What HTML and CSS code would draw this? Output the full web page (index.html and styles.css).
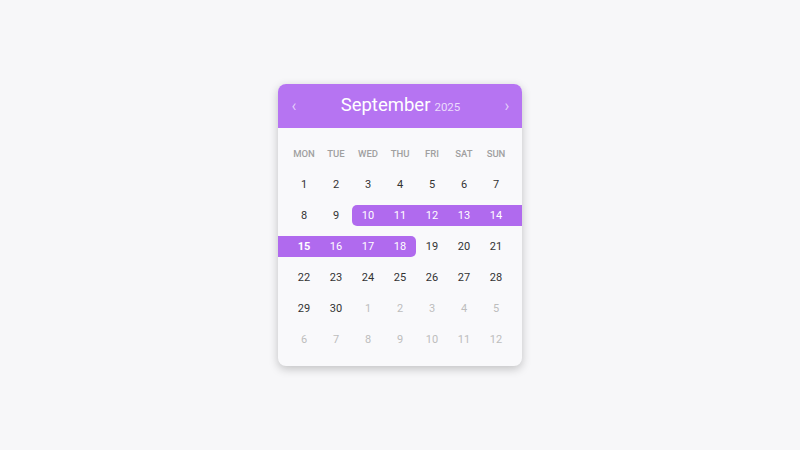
FILE: index.html
```html
<!DOCTYPE html>
<html>
<head>
<meta charset="utf-8">
<link rel="stylesheet" href="styles.css">
</head>
<body>
<div class="card">
  <div class="header">
    <span class="arrow">&#8249;</span>
    <div class="title"><span class="month">September</span><span class="year">2025</span></div>
    <span class="arrow">&#8250;</span>
  </div>
  <div class="body">
    <div class="row names">
      <span class="edge"></span>
      <span class="cell"><i>MON</i></span><span class="cell"><i>TUE</i></span><span class="cell"><i>WED</i></span><span class="cell"><i>THU</i></span><span class="cell"><i>FRI</i></span><span class="cell"><i>SAT</i></span><span class="cell"><i>SUN</i></span>
      <span class="edge"></span>
    </div>
    <div class="row">
      <span class="edge"></span>
      <span class="cell"><i>1</i></span><span class="cell"><i>2</i></span><span class="cell"><i>3</i></span><span class="cell"><i>4</i></span><span class="cell"><i>5</i></span><span class="cell"><i>6</i></span><span class="cell"><i>7</i></span>
      <span class="edge"></span>
    </div>
    <div class="row">
      <span class="edge"></span>
      <span class="cell"><i>8</i></span><span class="cell"><i>9</i></span><span class="cell in start"><i>10</i></span><span class="cell in"><i>11</i></span><span class="cell in"><i>12</i></span><span class="cell in"><i>13</i></span><span class="cell in"><i>14</i></span>
      <span class="edge in"><i></i></span>
    </div>
    <div class="row">
      <span class="edge in"><i></i></span>
      <span class="cell in bold"><i>15</i></span><span class="cell in"><i>16</i></span><span class="cell in"><i>17</i></span><span class="cell in end"><i>18</i></span><span class="cell"><i>19</i></span><span class="cell"><i>20</i></span><span class="cell"><i>21</i></span>
      <span class="edge"></span>
    </div>
    <div class="row">
      <span class="edge"></span>
      <span class="cell"><i>22</i></span><span class="cell"><i>23</i></span><span class="cell"><i>24</i></span><span class="cell"><i>25</i></span><span class="cell"><i>26</i></span><span class="cell"><i>27</i></span><span class="cell"><i>28</i></span>
      <span class="edge"></span>
    </div>
    <div class="row">
      <span class="edge"></span>
      <span class="cell"><i>29</i></span><span class="cell"><i>30</i></span><span class="cell muted"><i>1</i></span><span class="cell muted"><i>2</i></span><span class="cell muted"><i>3</i></span><span class="cell muted"><i>4</i></span><span class="cell muted"><i>5</i></span>
      <span class="edge"></span>
    </div>
    <div class="row">
      <span class="edge"></span>
      <span class="cell muted"><i>6</i></span><span class="cell muted"><i>7</i></span><span class="cell muted"><i>8</i></span><span class="cell muted"><i>9</i></span><span class="cell muted"><i>10</i></span><span class="cell muted"><i>11</i></span><span class="cell muted"><i>12</i></span>
      <span class="edge"></span>
    </div>
  </div>
</div>
</body>
</html>
```
FILE: styles.css
```css
html, body {
  margin: 0;
  padding: 0;
}
body {
  background: #f7f7f9;
  font-family: Roboto, "Liberation Sans", sans-serif;
  height: 100vh;
  display: flex;
  align-items: center;
  justify-content: center;
}
.card {
  width: 244px;
  height: 282px;
  background: #f9f9fb;
  border-radius: 8px;
  overflow: hidden;
  box-shadow: 0 3px 10px rgba(0, 0, 0, 0.22);
  display: flex;
  flex-direction: column;
}
.header {
  height: 44px;
  flex: none;
  background: #b674f2;
  display: flex;
  align-items: center;
  justify-content: space-between;
  padding: 0 11px 0 12px;
  color: #fff;
}
.arrow {
  font-size: 16px;
  color: rgba(255, 255, 255, 0.65);
  line-height: 1;
  width: 8px;
  text-align: center;
}
.title {
  display: flex;
  align-items: baseline;
  gap: 4px;
  margin-bottom: 3px;
}
.month {
  font-size: 18.5px;
  color: #fff;
}
.year {
  font-size: 11.5px;
  color: rgba(255, 255, 255, 0.75);
}
.body {
  padding: 10px 0 11px;
  display: flex;
  flex-direction: column;
}
.row {
  display: grid;
  grid-template-columns: 10px repeat(7, 32px) 10px;
  height: 31px;
  align-items: center;
}
.cell, .edge {
  display: flex;
  align-items: center;
  height: 31px;
}
.cell i, .edge i {
  font-style: normal;
  display: flex;
  align-items: center;
  justify-content: center;
  width: 100%;
  height: 21px;
  font-size: 11px;
  color: #333;
}
.names .cell i {
  font-size: 9.5px;
  font-weight: 500;
  color: #a0a0a0;
}
.muted i {
  color: #bdbdbd;
}
.in i {
  background: #b06aee;
  color: #fff;
}
.bold i {
  font-weight: 700;
}
.start i {
  border-radius: 5px 0 0 5px;
}
.end i {
  border-radius: 0 5px 5px 0;
}
```
